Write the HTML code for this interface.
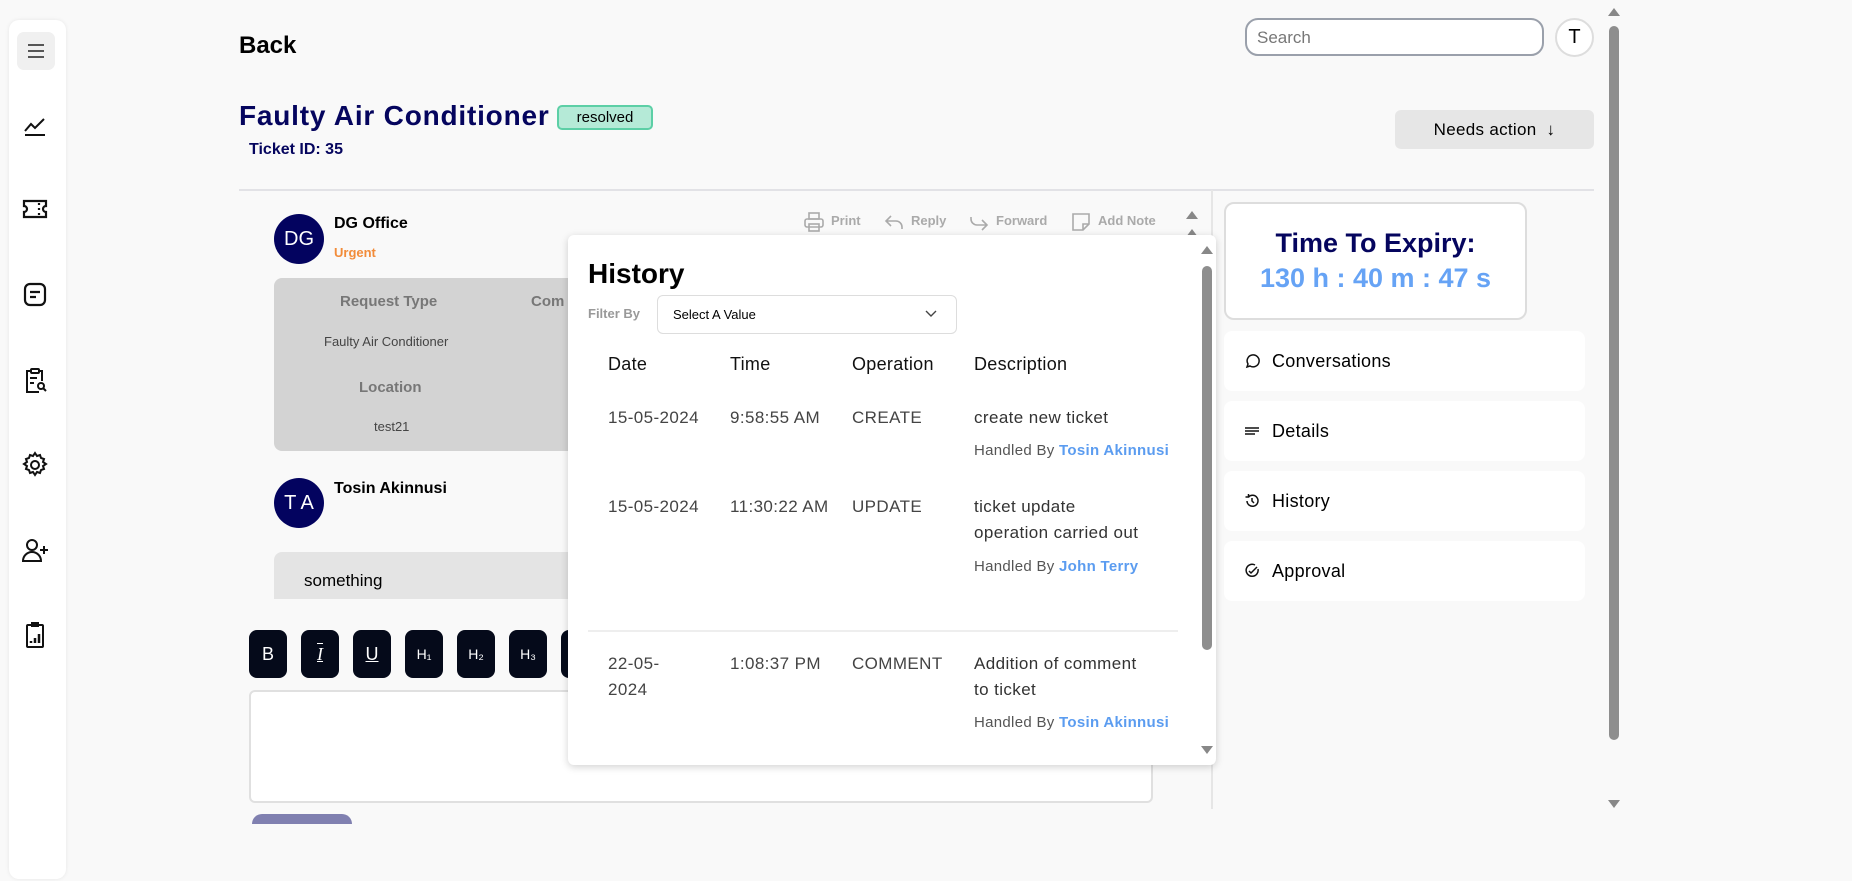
<!DOCTYPE html>
<html><head><meta charset="utf-8"><style>
*{box-sizing:border-box;margin:0;padding:0}
body{width:1852px;height:881px;background:#f9f9f9;font-family:"Liberation Sans",sans-serif;position:relative;overflow:hidden;color:#000}
.a{position:absolute}
.side{left:9px;top:20px;width:57px;height:859px;background:#fff;border-radius:10px;box-shadow:0 0 4px rgba(0,0,0,.08)}
.ic{position:absolute;left:20px;width:30px;height:30px}
.tb{position:absolute;top:630px;width:38px;height:48px;background:#050a1a;border-radius:8px;color:#fff;font-size:18px;display:flex;align-items:center;justify-content:center}
.acc{position:absolute;left:1224px;width:361px;height:60px;background:#fff;border-radius:8px;font-size:18px;display:flex;align-items:center;padding-left:20px;letter-spacing:.3px}
.acc svg{margin-right:12px}
.hd{position:absolute;top:354px;font-size:18px;color:#111;letter-spacing:.3px}
.c{position:absolute;font-size:17px;color:#444;line-height:26px;letter-spacing:.4px}
.hb{position:absolute;font-size:15px;color:#555;letter-spacing:.3px}
.hb b{color:#5b9cf0}
.act{position:absolute;top:213px;font-size:13px;font-weight:bold;color:#aaa}
.ar{position:absolute;width:0;height:0;border-left:6px solid transparent;border-right:6px solid transparent}
.up{border-bottom:8px solid #888}.dn{border-top:8px solid #888}
</style></head><body>
<div class="a side"></div>
<div class="a" style="left:17px;top:32px;width:38px;height:38px;background:#f0f0f0;border-radius:7px"></div>
<svg class="a" style="left:27px;top:43px" width="18" height="16" viewBox="0 0 18 16" stroke="#222" stroke-width="1.6"><path d="M1 2h16M1 8h16M1 14h16"/></svg>
<svg class="ic" style="top:109px" viewBox="0 0 30 30" fill="none" stroke="#111" stroke-width="2"><path d="M5 22l6-7 4 4 9-9M5 26h20"/></svg>
<svg class="ic" style="top:194px" viewBox="0 0 30 30" fill="none" stroke="#111" stroke-width="2.2"><path d="M4 7h22v5a3 3 0 0 0 0 6v5H4v-5a3 3 0 0 0 0-6z"/><path d="M19 9v2M19 14v2M19 19v2"/></svg>
<svg class="ic" style="top:279px" viewBox="0 0 30 30" fill="none" stroke="#111" stroke-width="2.2"><rect x="5" y="5" width="20" height="21" rx="5"/><path d="M10 13h10M10 18h6"/></svg>
<svg class="ic" style="top:365px" viewBox="0 0 30 30" fill="none" stroke="#111" stroke-width="2"><path d="M11 6H7v21h12M19 6h3v10"/><rect x="11" y="4" width="8" height="4" rx="1"/><path d="M10 13h7M10 18h4"/><circle cx="21" cy="21" r="3"/><path d="M23 23l3 3"/></svg>
<svg class="ic" style="top:450px" viewBox="0 0 30 30" fill="none" stroke="#111" stroke-width="2"><circle cx="15" cy="15" r="4"/><path d="M15 3l2 3 3-1 1 3 3 1-1 3 3 2-3 2 1 3-3 1-1 3-3-1-2 3-2-3-3 1-1-3-3-1 1-3-3-2 3-2-1-3 3-1 1-3 3 1z"/></svg>
<svg class="ic" style="top:535px" viewBox="0 0 30 30" fill="none" stroke="#111" stroke-width="2"><circle cx="12" cy="10" r="5"/><path d="M3 26a9 9 0 0 1 18 0zM24 11v8M20 15h8"/></svg>
<svg class="ic" style="top:620px" viewBox="0 0 30 30" fill="none" stroke="#111" stroke-width="2"><rect x="7" y="5" width="16" height="22" rx="1"/><rect x="12" y="3" width="6" height="3" fill="#111"/><path d="M11 23v-2M15 23v-5M19 23v-9" stroke-width="2.5"/></svg>

<div class="a" style="left:239px;top:32px;font-size:24px;font-weight:bold">Back</div>
<div class="a" style="left:239px;top:100px;font-size:28px;font-weight:bold;color:#05055e;letter-spacing:.8px">Faulty Air Conditioner</div>
<div class="a" style="left:557px;top:105px;width:96px;height:25px;background:#b5ead7;border:2px solid #5ccfa6;border-radius:5px;font-size:15px;text-align:center;line-height:21px">resolved</div>
<div class="a" style="left:249px;top:141px;font-size:16px;font-weight:bold;color:#05055e">Ticket ID: 35</div>

<div class="a" style="left:1245px;top:18px;width:299px;height:38px;border:2px solid #9aa0ab;border-radius:13px;background:#fff;font-size:17px;color:#777;padding:8px 10px">Search</div>
<div class="a" style="left:1555px;top:18px;width:39px;height:39px;border:2px solid #ddd;border-radius:50%;background:#fff;font-size:20px;text-align:center;line-height:35px">T</div>
<div class="a" style="left:1395px;top:110px;width:199px;height:39px;background:#e6e6e6;border-radius:6px;font-size:17px;text-align:center;line-height:39px;letter-spacing:.3px">Needs action &nbsp;↓</div>

<div class="a" style="left:239px;top:189px;width:1355px;height:2px;background:#e2e2e6"></div>
<div class="a" style="left:1211px;top:190px;width:2px;height:619px;background:#e6e6e6"></div>

<div class="a" style="left:1609px;top:26px;width:10px;height:714px;background:#8e8e8e;border-radius:5px"></div>
<div class="ar up" style="left:1608px;top:8px"></div>
<div class="ar dn" style="left:1608px;top:800px"></div>

<div class="a" style="left:1224px;top:202px;width:303px;height:118px;background:#fff;border:2px solid #ddd;border-radius:10px;text-align:center">
<div style="margin-top:24px;font-size:27px;font-weight:bold;color:#05055e">Time To Expiry:</div>
<div style="margin-top:4px;font-size:27px;font-weight:bold;color:#66a3f5">130 h : 40 m : 47 s</div></div>
<div class="acc" style="top:331px"><svg width="16" height="16" viewBox="0 0 16 16" fill="none" stroke="#111" stroke-width="1.5"><path d="M3 14l1-3a6 6 0 1 1 2 2z"/></svg>Conversations</div>
<div class="acc" style="top:401px"><svg width="16" height="16" viewBox="0 0 16 16" stroke="#111" stroke-width="1.5"><path d="M1 5h14M1 8h14M1 11h10"/></svg>Details</div>
<div class="acc" style="top:471px"><svg width="16" height="16" viewBox="0 0 16 16" fill="none" stroke="#111" stroke-width="1.5"><path d="M3 8a5.5 5.5 0 1 0 1.5-4M4.5 1v3h-3M8 5v3l2 2"/></svg>History</div>
<div class="acc" style="top:541px"><svg width="16" height="16" viewBox="0 0 16 16" fill="none" stroke="#111" stroke-width="1.5"><path d="M14 6a6 6 0 1 1-3-4M5 8l2 2 6-6"/></svg>Approval</div>

<div class="a" style="left:274px;top:214px;width:50px;height:50px;border-radius:50%;background:#03035f;color:#fff;font-size:20px;text-align:center;line-height:50px">DG</div>
<div class="a" style="left:334px;top:215px;font-size:16px;font-weight:bold">DG Office</div>
<div class="a" style="left:334px;top:245px;font-size:13px;font-weight:bold;color:#f28c3a">Urgent</div>
<svg class="a" style="left:803px;top:211px" width="22" height="22" viewBox="0 0 22 22" fill="none" stroke="#aaa" stroke-width="1.6"><rect x="2" y="8" width="18" height="8" rx="2"/><rect x="6" y="2" width="10" height="6"/><rect x="6" y="13" width="10" height="7"/></svg>
<div class="act" style="left:831px">Print</div>
<svg class="a" style="left:884px;top:212px" width="20" height="20" viewBox="0 0 20 20" fill="none" stroke="#aaa" stroke-width="1.6"><path d="M7 4L2 9l5 5M2 9h10a6 6 0 0 1 6 6v2"/></svg>
<div class="act" style="left:911px">Reply</div>
<svg class="a" style="left:969px;top:212px" width="20" height="20" viewBox="0 0 20 20" fill="none" stroke="#aaa" stroke-width="1.6"><path d="M13 8l5 5-5 5M18 13H8a6 6 0 0 1-6-6V5"/></svg>
<div class="act" style="left:996px">Forward</div>
<svg class="a" style="left:1071px;top:212px" width="20" height="20" viewBox="0 0 20 20" fill="none" stroke="#aaa" stroke-width="1.6"><path d="M2 2h16v10l-6 6H2zM18 12h-6v6"/></svg>
<div class="act" style="left:1098px">Add Note</div>
<div class="ar up" style="left:1186px;top:211px"></div>
<div class="ar up" style="left:1186px;top:229px"></div>

<div class="a" style="left:274px;top:278px;width:320px;height:173px;background:#d3d3d3;border-radius:8px"></div>
<div class="a" style="left:340px;top:293px;font-size:15px;font-weight:bold;color:#777">Request Type</div>
<div class="a" style="left:531px;top:293px;font-size:15px;font-weight:bold;color:#777">Com</div>
<div class="a" style="left:324px;top:334px;font-size:13px;color:#444">Faulty Air Conditioner</div>
<div class="a" style="left:359px;top:379px;font-size:15px;font-weight:bold;color:#777">Location</div>
<div class="a" style="left:374px;top:419px;font-size:13px;color:#444">test21</div>

<div class="a" style="left:274px;top:478px;width:50px;height:50px;border-radius:50%;background:#03035f;color:#fff;font-size:20px;text-align:center;line-height:50px">T A</div>
<div class="a" style="left:334px;top:480px;font-size:16px;font-weight:bold">Tosin Akinnusi</div>
<div class="a" style="left:274px;top:552px;width:320px;height:47px;background:#e4e4e4;border-radius:8px 0 0 0"></div>
<div class="a" style="left:304px;top:571px;font-size:17px">something</div>

<div class="tb" style="left:249px">B</div>
<div class="tb" style="left:301px;font-style:italic;text-decoration:underline overline;font-family:'Liberation Serif',serif">I</div>
<div class="tb" style="left:353px;text-decoration:underline">U</div>
<div class="tb" style="left:405px;font-size:14px">H₁</div>
<div class="tb" style="left:457px;font-size:14px">H₂</div>
<div class="tb" style="left:509px;font-size:14px">H₃</div>
<div class="tb" style="left:561px"></div>
<div class="a" style="left:249px;top:690px;width:904px;height:113px;border:2px solid #e0e0e0;border-radius:6px;background:#fff"></div>
<div class="a" style="left:252px;top:814px;width:100px;height:10px;background:#8080b0;border-radius:10px 10px 0 0"></div>

<div class="a" style="left:568px;top:235px;width:648px;height:530px;background:#fff;border-radius:6px;box-shadow:0 2px 8px rgba(0,0,0,.18)"></div>
<div class="a" style="left:588px;top:258px;font-size:28px;font-weight:bold">History</div>
<div class="a" style="left:588px;top:306px;font-size:13px;font-weight:bold;color:#999">Filter By</div>
<div class="a" style="left:657px;top:295px;width:300px;height:39px;border:1px solid #ddd;border-radius:6px;font-size:13px;padding:11px 15px">Select A Value</div>
<svg class="a" style="left:924px;top:309px" width="14" height="10" viewBox="0 0 14 10" fill="none" stroke="#444" stroke-width="1.4"><path d="M2 2l5 5 5-5"/></svg>
<div class="hd" style="left:608px">Date</div>
<div class="hd" style="left:730px">Time</div>
<div class="hd" style="left:852px">Operation</div>
<div class="hd" style="left:974px">Description</div>
<div class="c" style="left:608px;top:405px">15-05-2024</div>
<div class="c" style="left:730px;top:405px">9:58:55 AM</div>
<div class="c" style="left:852px;top:405px">CREATE</div>
<div class="c" style="left:974px;top:405px;color:#333">create new ticket</div>
<div class="hb" style="left:974px;top:442px">Handled By <b>Tosin Akinnusi</b></div>
<div class="c" style="left:608px;top:494px">15-05-2024</div>
<div class="c" style="left:730px;top:494px">11:30:22 AM</div>
<div class="c" style="left:852px;top:494px">UPDATE</div>
<div class="c" style="left:974px;top:494px;color:#333">ticket update<br>operation carried out</div>
<div class="hb" style="left:974px;top:558px">Handled By <b>John Terry</b></div>
<div class="a" style="left:588px;top:630px;width:590px;height:2px;background:#eee"></div>
<div class="c" style="left:608px;top:651px">22-05-<br>2024</div>
<div class="c" style="left:730px;top:651px">1:08:37 PM</div>
<div class="c" style="left:852px;top:651px">COMMENT</div>
<div class="c" style="left:974px;top:651px;color:#333">Addition of comment<br>to ticket</div>
<div class="hb" style="left:974px;top:714px">Handled By <b>Tosin Akinnusi</b></div>
<div class="a" style="left:1202px;top:266px;width:10px;height:384px;background:#8e8e8e;border-radius:5px"></div>
<div class="ar up" style="left:1201px;top:246px"></div>
<div class="ar dn" style="left:1201px;top:746px"></div>
</body></html>
